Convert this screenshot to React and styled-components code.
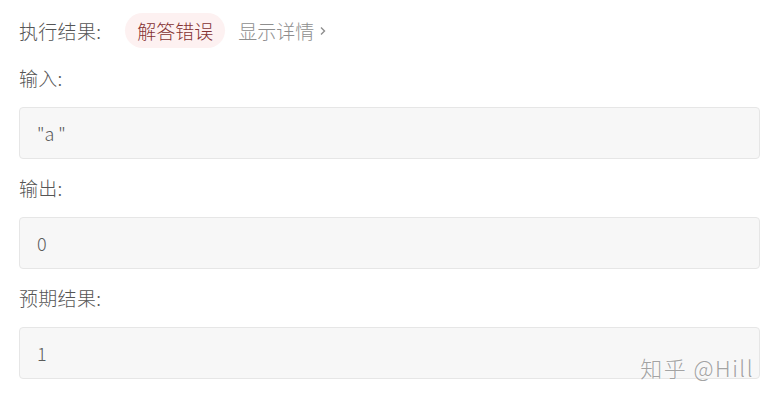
import React from "react";
import styled, { createGlobalStyle } from "styled-components";

const GlobalStyle = createGlobalStyle`
  html, body {
    margin: 0;
    padding: 0;
    background: #ffffff;
  }
  body {
    font-family: "Noto Sans CJK SC", "Noto Sans", sans-serif;
    font-weight: 300;
  }
`;

const sections = [
  { label: "输入:", value: "\"a \"" },
  { label: "输出:", value: "0" },
  { label: "预期结果:", value: "1" },
];

function App() {
  return (
    <>
      <GlobalStyle />
      <Page>
        <StatusRow>
          <Label>执行结果:</Label>
          <Badge>解答错误</Badge>
          <Details>
            显示详情
            <Chevron viewBox="0 0 8 12">
              <path d="M2 2.5 L5.5 6 L2 9.5" />
            </Chevron>
          </Details>
        </StatusRow>
        {sections.map((s) => (
          <React.Fragment key={s.label}>
            <Label>{s.label}</Label>
            <ValueBox>{s.value}</ValueBox>
          </React.Fragment>
        ))}
        <Watermark>知乎 @Hill</Watermark>
      </Page>
    </>
  );
}

const Page = styled.div`
  position: relative;
  width: 768px;
  height: 400px;
  box-sizing: border-box;
  padding: 13px 8px 0 19px;
  display: flex;
  flex-direction: column;
  gap: 17px;
  overflow: hidden;
`;

const StatusRow = styled.div`
  display: flex;
  align-items: center;
  height: 35px;
  margin-bottom: 1px;
`;

const Label = styled.div`
  height: 24px;
  line-height: 24px;
  font-size: 19px;
  color: #555555;
  white-space: nowrap;
  letter-spacing: 0.3px;
`;

const Badge = styled.span`
  margin-left: 24px;
  height: 35px;
  padding: 0 12px;
  border-radius: 18px;
  background: #fdf1f1;
  color: #853232;
  font-size: 19px;
  display: flex;
  align-items: center;
`;

const Details = styled.span`
  margin-left: 13px;
  display: flex;
  align-items: center;
  gap: 5px;
  font-size: 19px;
  color: #8e8e8e;
`;

const Chevron = styled.svg`
  width: 8px;
  height: 12px;
  fill: none;
  stroke: #8e8e8e;
  stroke-width: 1.4;
`;

const ValueBox = styled.div`
  height: 52px;
  box-sizing: border-box;
  border: 1px solid #e6e6e6;
  border-radius: 4px;
  background: #f7f7f7;
  padding: 0 17px;
  display: flex;
  align-items: center;
  font-size: 18px;
  color: #5c5c5c;
  white-space: pre;
`;

const Watermark = styled.div`
  position: absolute;
  right: 14px;
  bottom: 17px;
  font-size: 22px;
  color: #a3a3a3;
  letter-spacing: 1.5px;
  text-shadow: 0 0 2px #ffffff, 0 0 1px #ffffff;
`;

export default App;
